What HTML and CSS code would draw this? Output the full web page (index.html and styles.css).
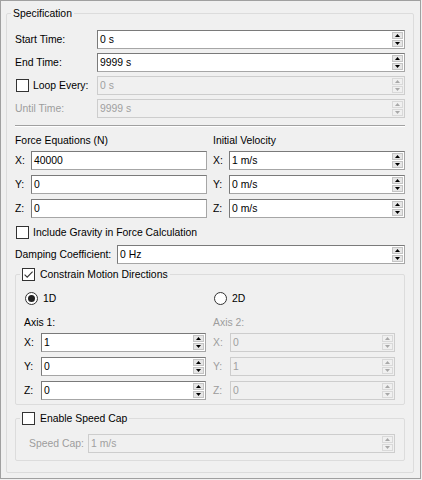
FILE: index.html
```html
<!DOCTYPE html>
<html>
<head>
<meta charset="utf-8">
<title>Specification</title>
<link rel="stylesheet" href="styles.css">
</head>
<body>
<div class="window">
  <fieldset class="group spec">
    <legend class="title">Specification</legend>

    <div class="form">
      <span class="lbl">Start Time:</span>
      <div class="spin"><span class="val">0 s</span><span class="btns"><i class="up"></i><i class="dn"></i></span></div>

      <span class="lbl">End Time:</span>
      <div class="spin"><span class="val">9999 s</span><span class="btns"><i class="up"></i><i class="dn"></i></span></div>

      <span class="chk-lbl"><span class="box"></span>Loop Every:</span>
      <div class="spin disabled"><span class="val">0 s</span><span class="btns"><i class="up"></i><i class="dn"></i></span></div>

      <span class="lbl dim">Until Time:</span>
      <div class="spin disabled"><span class="val">9999 s</span><span class="btns"><i class="up"></i><i class="dn"></i></span></div>
    </div>

    <div class="sep"></div>

    <div class="cols">
      <div class="col">
        <div class="col-head">Force Equations (N)</div>
        <div class="xyz">
          <span>X:</span><div class="spin"><span class="val">40000</span></div>
          <span>Y:</span><div class="spin"><span class="val">0</span></div>
          <span>Z:</span><div class="spin"><span class="val">0</span></div>
        </div>
      </div>
      <div class="col">
        <div class="col-head">Initial Velocity</div>
        <div class="xyz">
          <span>X:</span><div class="spin"><span class="val">1 m/s</span><span class="btns"><i class="up"></i><i class="dn"></i></span></div>
          <span>Y:</span><div class="spin"><span class="val">0 m/s</span><span class="btns"><i class="up"></i><i class="dn"></i></span></div>
          <span>Z:</span><div class="spin"><span class="val">0 m/s</span><span class="btns"><i class="up"></i><i class="dn"></i></span></div>
        </div>
      </div>
    </div>

    <div class="check-row"><span class="box"></span>Include Gravity in Force Calculation</div>

    <div class="damp-row">
      <span class="lbl">Damping Coefficient:</span>
      <div class="spin"><span class="val">0 Hz</span><span class="btns"><i class="up"></i><i class="dn"></i></span></div>
    </div>

    <fieldset class="group sub constrain">
      <legend class="chk-legend"><span class="box"><svg class="tick" width="11" height="11" viewBox="0 0 11 11"><path d="M1.6 5.6 L4.2 8.2 L9.6 2.6" fill="none" stroke="#333" stroke-width="1.1"/></svg></span>Constrain Motion Directions</legend>
      <div class="axes">
        <div class="axis">
          <div class="radio-row"><span class="radio on"></span>1D</div>
          <div class="axis-head">Axis 1:</div>
          <div class="xyz axis-xyz">
            <span>X:</span><div class="spin"><span class="val">1</span><span class="btns"><i class="up"></i><i class="dn"></i></span></div>
            <span>Y:</span><div class="spin"><span class="val">0</span><span class="btns"><i class="up"></i><i class="dn"></i></span></div>
            <span>Z:</span><div class="spin"><span class="val">0</span><span class="btns"><i class="up"></i><i class="dn"></i></span></div>
          </div>
        </div>
        <div class="axis">
          <div class="radio-row"><span class="radio"></span>2D</div>
          <div class="axis-head dim">Axis 2:</div>
          <div class="xyz axis-xyz">
            <span class="dim">X:</span><div class="spin disabled"><span class="val">0</span><span class="btns"><i class="up"></i><i class="dn"></i></span></div>
            <span class="dim">Y:</span><div class="spin disabled"><span class="val">1</span><span class="btns"><i class="up"></i><i class="dn"></i></span></div>
            <span class="dim">Z:</span><div class="spin disabled"><span class="val">0</span><span class="btns"><i class="up"></i><i class="dn"></i></span></div>
          </div>
        </div>
      </div>
    </fieldset>

    <fieldset class="group sub speed">
      <legend class="chk-legend"><span class="box"></span>Enable Speed Cap</legend>
      <div class="speed-row">
        <span class="lbl dim">Speed Cap:</span>
        <div class="spin disabled"><span class="val">1 m/s</span><span class="btns"><i class="up"></i><i class="dn"></i></span></div>
      </div>
    </fieldset>
  </fieldset>
</div>
</body>
</html>
```

FILE: styles.css
```css
* { box-sizing: border-box; }

html, body {
  margin: 0;
  padding: 0;
  background: #f0f0f0;
}

body {
  font-family: "Liberation Sans", Arial, sans-serif;
  font-size: 10.4px;
  line-height: 13px;
  color: #000;
}

.window {
  width: 421px;
  height: 479px;
  border: 1px solid #a0a0a0;
  background: #f0f0f0;
  display: flex;
  flex-direction: column;
}

.group {
  border: 1px solid #dcdcdc;
  border-radius: 2px;
  margin: 0;
  min-width: 0;
}

.spec {
  flex: 1;
  margin: 6px 6px 5px 5px;
  padding: 10px 8px 8px 8px;
}

.title {
  padding: 0 2px;
  margin-left: -4px;
  height: 13px;
  line-height: 13px;
}

.dim { color: #9d9d9d; }

/* top form */
.form {
  display: grid;
  grid-template-columns: 82px 1fr;
  grid-auto-rows: 19px;
  row-gap: 4px;
  align-items: center;
}

.chk-lbl,
.check-row {
  display: flex;
  align-items: center;
  gap: 4px;
  padding-left: 1px;
}

.box {
  width: 13px;
  height: 13px;
  flex: none;
  border: 1px solid #333;
  background: #fff;
  display: flex;
}

.tick { display: block; }

/* spin / line edits */
.spin {
  height: 19px;
  display: flex;
  background: #fff;
  border: 1px solid;
  border-color: #7a7a7a #a6a6a6 #a6a6a6 #7a7a7a;
  min-width: 0;
}

.spin .val {
  flex: 1;
  padding-left: 2px;
  line-height: 17px;
  white-space: nowrap;
  overflow: hidden;
}

.btns {
  width: 11px;
  margin: 1px 1px 1px 0;
  display: flex;
  flex-direction: column;
  gap: 1px;
}

.btns i {
  flex: 1;
  display: flex;
  align-items: center;
  justify-content: center;
  background: #e6e6e6;
  border: 1px solid #c4c4c4;
}

.btns i::before {
  content: "";
  width: 5px;
  height: 3px;
  background: #000;
}

.btns .up::before { clip-path: polygon(50% 0, 100% 100%, 0 100%); }
.btns .dn::before { clip-path: polygon(0 0, 100% 0, 50% 100%); }

.spin.disabled {
  background: #f0f0f0;
  border-color: #cdcdcd;
  color: #a0a0a0;
}

.spin.disabled .btns i {
  background: #f0f0f0;
  border-color: #d9d9d9;
}

.spin.disabled .btns i::before { background: #a8a8a8; }

/* separator */
.sep {
  margin-top: 7px;
  border-top: 1px solid #a0a0a0;
  border-bottom: 1px solid #fff;
}

/* two columns */
.cols {
  margin-top: 7px;
  display: grid;
  grid-template-columns: 1fr 1fr;
  column-gap: 6px;
}

.col { min-width: 0; }

.col-head { margin-bottom: 4px; }

.xyz {
  display: grid;
  grid-template-columns: 16px 1fr;
  grid-auto-rows: 19px;
  row-gap: 5px;
  align-items: center;
}

.check-row {
  height: 19px;
  margin-top: 5px;
}

.damp-row {
  margin-top: 3px;
  display: grid;
  grid-template-columns: 102px 1fr;
  grid-auto-rows: 19px;
  align-items: center;
}

/* sub groups */
.sub { margin-top: 4px; }

.chk-legend {
  display: flex;
  align-items: center;
  gap: 5px;
  height: 13px;
  padding: 0 2px;
  margin-left: -4px;
}

.constrain { padding: 11px 9px 4px 8px; }

.axes {
  display: grid;
  grid-template-columns: 1fr 1fr;
  column-gap: 7px;
}

.axis { min-width: 0; }

.radio-row {
  display: flex;
  align-items: center;
  gap: 5px;
  height: 13px;
  padding-left: 1px;
}

.radio {
  width: 13px;
  height: 13px;
  border: 1px solid #333;
  border-radius: 50%;
  background: #fff;
  position: relative;
}

.radio.on::after {
  content: "";
  position: absolute;
  inset: 2px;
  border-radius: 50%;
  background: #222;
}

.axis-head { margin-top: 11px; }

.axis-xyz {
  margin-top: 4px;
  grid-template-columns: 17px 1fr;
}

.speed {
  margin-top: 7px;
  padding: 9px 9px 7px 8px;
}

.speed-row {
  display: grid;
  grid-template-columns: 59px 1fr;
  grid-auto-rows: 19px;
  align-items: center;
  padding-left: 5px;
}
```
